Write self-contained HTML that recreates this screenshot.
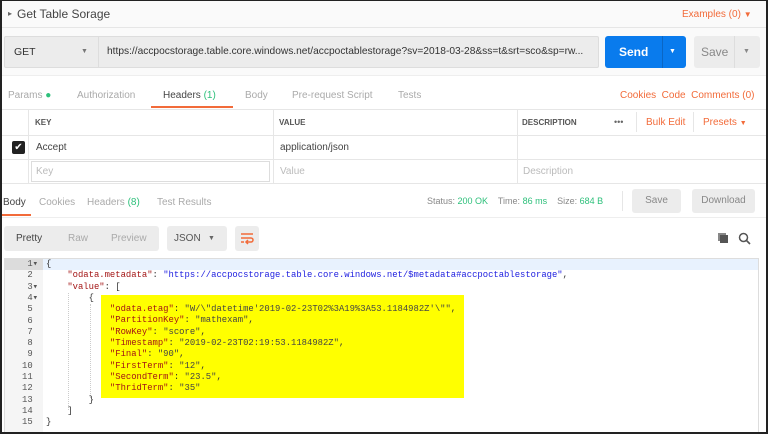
<!DOCTYPE html>
<html><head><meta charset="utf-8"><style>
*{box-sizing:border-box;margin:0;padding:0}
body{width:768px;height:434px;overflow:hidden;background:#fff;font-family:"Liberation Sans",sans-serif;position:relative;color:#505050}
.a{position:absolute;white-space:nowrap}
.frame{position:absolute;left:0;top:0;width:768px;height:434px;border:2px solid #222;border-top:1px solid #222;pointer-events:none;z-index:9}
.o{color:#f26b3a}
.g{color:#2ec07b}
.l{color:#aaa}
.mono{font-family:"Liberation Mono",monospace;font-size:8.9px}
.ln{position:absolute;left:4px;width:34px;text-align:right;color:#555;font-family:"Liberation Mono",monospace;font-size:8.9px}
.k{color:#a31515}
.s{color:#2020e0}
.ys{color:#444}
</style></head><body>
<div class="frame"></div>
<div class="a" style="left:0;top:0;width:768px;height:28px;background:#fafafa;border-bottom:1px solid #e6e6e6"></div>
<div class="a" style="left:8px;top:9px;font-size:8px;color:#666">▸</div>
<div class="a" style="left:17px;top:7px;font-size:12px;color:#444">Get Table Sorage</div>
<div class="a o" style="left:682px;top:9px;font-size:10px">Examples (0) <span style="font-size:8px">▼</span></div>
<div class="a" style="left:0;top:28px;width:768px;height:48px;background:#fafafa;border-bottom:1px solid #eee"></div>
<div class="a" style="left:4px;top:36px;width:595px;height:32px;background:#ececec;border:1px solid #ddd;border-radius:2px"></div>
<div class="a" style="left:98px;top:36px;width:1px;height:32px;background:#ddd"></div>
<div class="a" style="left:14px;top:46px;font-size:10.5px;color:#333">GET</div>
<div class="a" style="left:81px;top:48px;font-size:7px;color:#777">▼</div>
<div class="a" style="left:107px;top:46px;font-size:10.2px;color:#333">https://accpocstorage.table.core.windows.net/accpoctablestorage?sv=2018-03-28&amp;ss=t&amp;srt=sco&amp;sp=rw...</div>
<div class="a" style="left:605px;top:36px;width:81px;height:32px;background:#097bed;border-radius:3px"></div>
<div class="a" style="left:662px;top:36px;width:1px;height:32px;background:#0a66c4"></div>
<div class="a" style="left:619px;top:45px;font-size:12px;font-weight:bold;color:#fff">Send</div>
<div class="a" style="left:669px;top:48px;font-size:7px;color:#fff">▼</div>
<div class="a" style="left:694px;top:36px;width:66px;height:32px;background:#ececec;border-radius:3px"></div>
<div class="a" style="left:734px;top:36px;width:1px;height:32px;background:#ddd"></div>
<div class="a" style="left:701px;top:45px;font-size:12px;color:#888">Save</div>
<div class="a" style="left:743px;top:48px;font-size:7px;color:#888">▼</div>
<div class="a" style="left:8px;top:90px;font-size:10px"><span class="l">Params</span> <span class="g">●</span></div>
<div class="a l" style="left:77px;top:90px;font-size:10px">Authorization</div>
<div class="a" style="left:163px;top:90px;font-size:10px;color:#444">Headers <span class="g">(1)</span></div>
<div class="a" style="left:151px;top:106px;width:82px;height:2px;background:#f26b3a"></div>
<div class="a l" style="left:245px;top:90px;font-size:10px">Body</div>
<div class="a l" style="left:292px;top:90px;font-size:10px">Pre-request Script</div>
<div class="a l" style="left:398px;top:90px;font-size:10px">Tests</div>
<div class="a o" style="left:620px;top:90px;font-size:10px">Cookies&nbsp;&nbsp;Code&nbsp;&nbsp;Comments (0)</div>
<div class="a" style="left:0;top:109px;width:766px;height:1px;background:#e6e6e6"></div>
<div class="a" style="left:0;top:135px;width:766px;height:1px;background:#e6e6e6"></div>
<div class="a" style="left:0;top:159px;width:766px;height:1px;background:#e6e6e6"></div>
<div class="a" style="left:0;top:183px;width:766px;height:1px;background:#e6e6e6"></div>
<div class="a" style="left:28px;top:110px;width:1px;height:74px;background:#e6e6e6"></div>
<div class="a" style="left:273px;top:110px;width:1px;height:74px;background:#e6e6e6"></div>
<div class="a" style="left:517px;top:110px;width:1px;height:74px;background:#e6e6e6"></div>
<div class="a" style="left:35px;top:118px;font-size:8px;font-weight:bold;color:#555">KEY</div>
<div class="a" style="left:279px;top:118px;font-size:8px;font-weight:bold;color:#555">VALUE</div>
<div class="a" style="left:522px;top:118px;font-size:8px;font-weight:bold;color:#555">DESCRIPTION</div>
<div class="a" style="left:614px;top:117px;font-size:9px;color:#666">•••</div>
<div class="a" style="left:636px;top:112px;width:1px;height:20px;background:#e6e6e6"></div>
<div class="a o" style="left:646px;top:117px;font-size:10px">Bulk Edit</div>
<div class="a" style="left:693px;top:112px;width:1px;height:20px;background:#e6e6e6"></div>
<div class="a o" style="left:703px;top:117px;font-size:10px">Presets <span style="font-size:7px">▼</span></div>
<div class="a" style="left:12px;top:141px;width:13px;height:13px;background:#222;border-radius:2px;color:#fff;font-size:10px;text-align:center;line-height:13px">✔</div>
<div class="a" style="left:36px;top:142px;font-size:10px;color:#444">Accept</div>
<div class="a" style="left:280px;top:142px;font-size:10px;color:#444">application/json</div>
<div class="a" style="left:31px;top:161px;width:239px;height:21px;border:1px solid #ddd"></div>
<div class="a" style="left:36px;top:166px;font-size:10px;color:#bbb">Key</div>
<div class="a" style="left:280px;top:166px;font-size:10px;color:#bbb">Value</div>
<div class="a" style="left:523px;top:166px;font-size:10px;color:#bbb">Description</div>
<div class="a" style="left:3px;top:197px;font-size:10px;color:#444">Body</div>
<div class="a" style="left:0;top:214px;width:31px;height:2px;background:#f26b3a"></div>
<div class="a l" style="left:39px;top:197px;font-size:10px">Cookies</div>
<div class="a l" style="left:87px;top:197px;font-size:10px">Headers <span class="g">(8)</span></div>
<div class="a l" style="left:157px;top:197px;font-size:10px">Test Results</div>
<div class="a" style="left:427px;top:196px;font-size:9px;color:#888">Status: <span class="g">200 OK</span>&nbsp;&nbsp;&nbsp; Time: <span class="g">86 ms</span>&nbsp;&nbsp;&nbsp; Size: <span class="g">684 B</span></div>
<div class="a" style="left:622px;top:191px;width:1px;height:20px;background:#e6e6e6"></div>
<div class="a" style="left:632px;top:189px;width:49px;height:24px;background:#ececec;border-radius:3px;font-size:10px;color:#888;text-align:center;line-height:24px">Save</div>
<div class="a" style="left:692px;top:189px;width:63px;height:24px;background:#ececec;border-radius:3px;font-size:10px;color:#888;text-align:center;line-height:24px">Download</div>
<div class="a" style="left:0;top:217px;width:766px;height:1px;background:#eee"></div>
<div class="a" style="left:4px;top:226px;width:155px;height:25px;background:#ececec;border-radius:3px"></div>
<div class="a" style="left:16px;top:233px;font-size:10px;color:#444">Pretty</div>
<div class="a l" style="left:68px;top:233px;font-size:10px">Raw</div>
<div class="a l" style="left:111px;top:233px;font-size:10px">Preview</div>
<div class="a" style="left:167px;top:226px;width:60px;height:25px;background:#ececec;border-radius:3px"></div>
<div class="a" style="left:174px;top:233px;font-size:10px;color:#555">JSON</div>
<div class="a" style="left:208px;top:235px;font-size:7px;color:#666">▼</div>
<div class="a" style="left:235px;top:226px;width:24px;height:25px;background:#ececec;border-radius:3px"></div>
<svg class="a" style="left:239px;top:231px" width="16" height="14" viewBox="0 0 16 14"><path d="M2 3H14M2 7H12a2 2 0 0 1 0 4H7M9 9L7 11L9 13M2 11H5" stroke="#f26b3a" stroke-width="1.5" fill="none"/></svg>
<svg class="a" style="left:717px;top:232px" width="12" height="12" viewBox="0 0 12 12"><rect x="1" y="1" width="8" height="8" fill="#888"/><rect x="3" y="3" width="8" height="8" fill="#555"/></svg>
<svg class="a" style="left:738px;top:232px" width="13" height="13" viewBox="0 0 13 13"><circle cx="5.5" cy="5.5" r="4" stroke="#555" stroke-width="1.5" fill="none"/><path d="M8.5 8.5L12 12" stroke="#555" stroke-width="1.6"/></svg>
<div class="a" style="left:4px;top:258px;width:755px;height:176px;border:1px solid #ddd;background:#fff"></div>
<div class="a" style="left:5px;top:259px;width:38px;height:175px;background:#f5f5f5"></div>
<div class="a" style="left:43px;top:259px;width:715px;height:11px;background:#e8f2fe"></div>
<div class="a" style="left:5px;top:259px;width:38px;height:11px;background:#dcdcdc"></div>
<div class="a" style="left:101px;top:295px;width:363px;height:103px;background:#ffff00"></div>
<div class="a" style="left:68px;top:293px;width:0;height:117px;border-left:1px dotted #ccc"></div>
<div class="a" style="left:90px;top:304px;width:0;height:94px;border-left:1px dotted #ccc"></div>
<div class="ln" style="top:259px">1▾</div>
<div class="ln" style="top:270.3px">2&nbsp;</div>
<div class="ln" style="top:281.6px">3▾</div>
<div class="ln" style="top:292.9px">4▾</div>
<div class="ln" style="top:304.2px">5&nbsp;</div>
<div class="ln" style="top:315.5px">6&nbsp;</div>
<div class="ln" style="top:326.8px">7&nbsp;</div>
<div class="ln" style="top:338.1px">8&nbsp;</div>
<div class="ln" style="top:349.4px">9&nbsp;</div>
<div class="ln" style="top:360.7px">10&nbsp;</div>
<div class="ln" style="top:372px">11&nbsp;</div>
<div class="ln" style="top:383.3px">12&nbsp;</div>
<div class="ln" style="top:394.6px">13&nbsp;</div>
<div class="ln" style="top:405.9px">14&nbsp;</div>
<div class="ln" style="top:417.2px">15&nbsp;</div>
<div class="a mono" style="left:46px;top:259px;line-height:11.3px;color:#333;white-space:pre">{
    <span class="k">"odata.metadata"</span>: <span class="s">"https://accpocstorage.table.core.windows.net/$metadata#accpoctablestorage"</span>,
    <span class="k">"value"</span>: [
        {
            <span class="k">"odata.etag"</span>: <span class="ys">"W/\"datetime'2019-02-23T02%3A19%3A53.1184982Z'\""</span>,
            <span class="k">"PartitionKey"</span>: <span class="ys">"mathexam"</span>,
            <span class="k">"RowKey"</span>: <span class="ys">"score"</span>,
            <span class="k">"Timestamp"</span>: <span class="ys">"2019-02-23T02:19:53.1184982Z"</span>,
            <span class="k">"Final"</span>: <span class="ys">"90"</span>,
            <span class="k">"FirstTerm"</span>: <span class="ys">"12"</span>,
            <span class="k">"SecondTerm"</span>: <span class="ys">"23.5"</span>,
            <span class="k">"ThridTerm"</span>: <span class="ys">"35"</span>
        }
    ]
}</div>
</body></html>
